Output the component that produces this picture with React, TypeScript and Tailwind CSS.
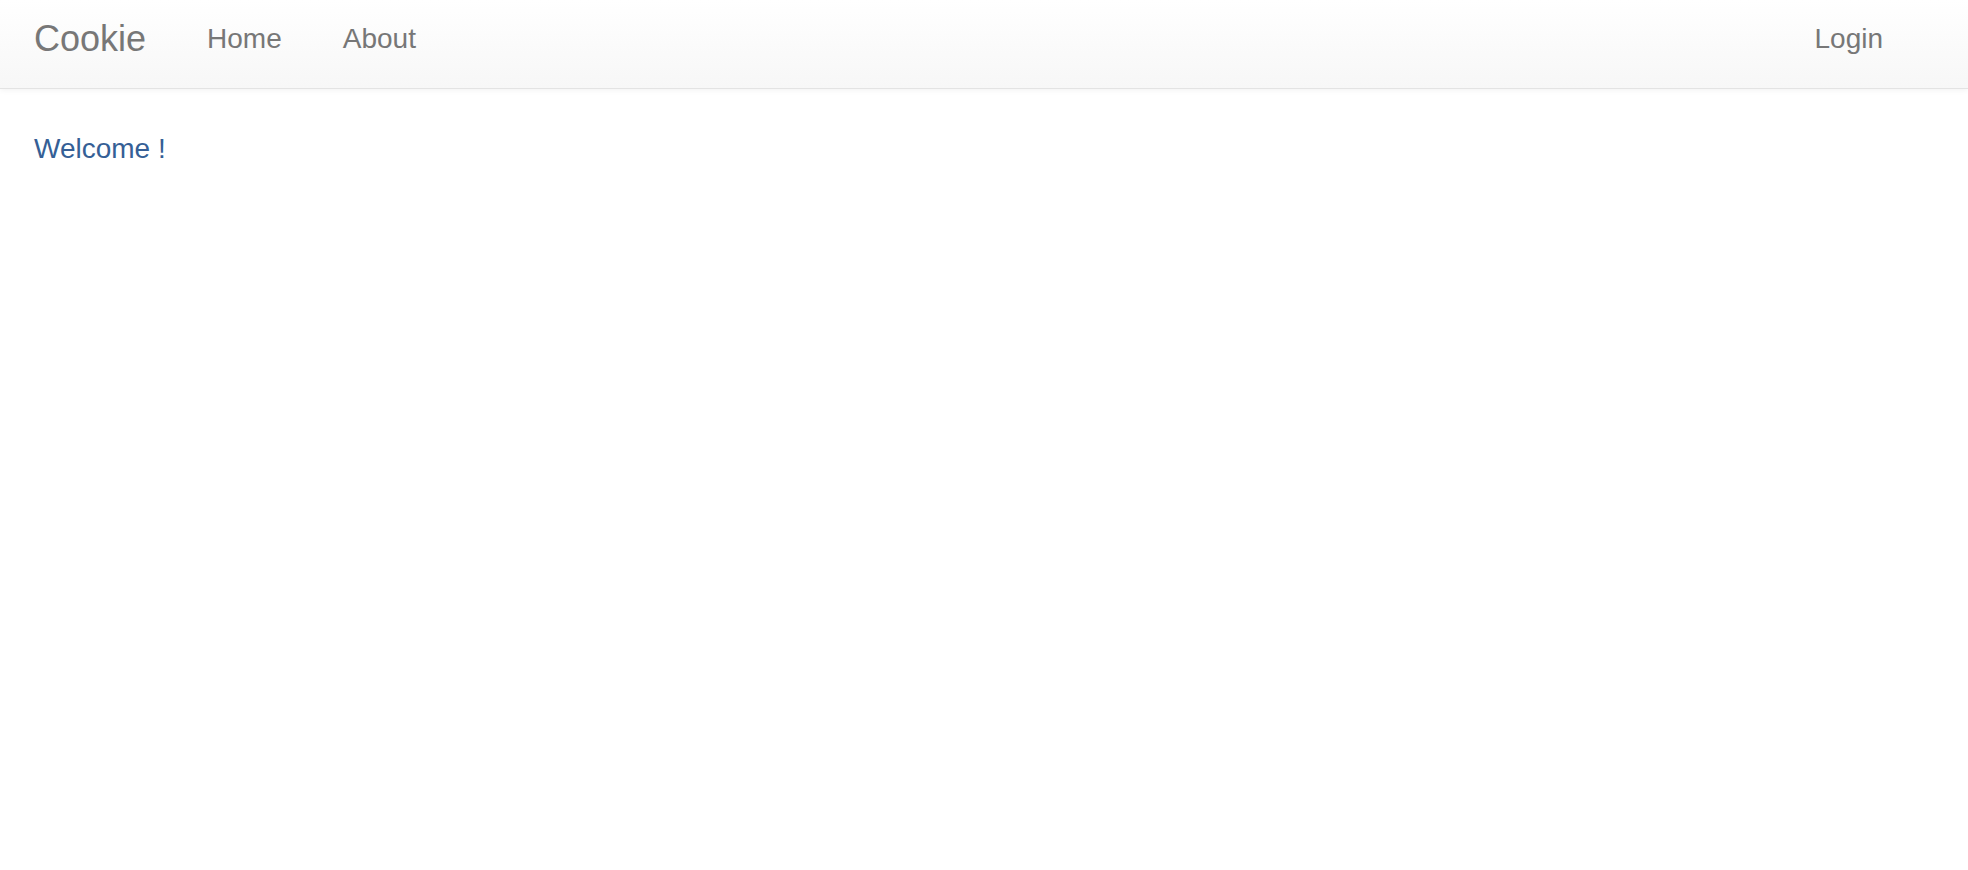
export default function App() {
  return (
    <div className="min-h-screen bg-white" style={{ fontFamily: '"Liberation Sans", Arial, sans-serif' }}>
      <nav className="h-[89px] flex items-start bg-gradient-to-b from-white to-[#f7f7f7] border-b border-[#e3e3e3] shadow-[0_1px_6px_rgba(0,0,0,0.06)] text-[#777]">
        <a href="/" className="ml-[34px] pt-[21px] text-[36px] leading-[36px]">Cookie</a>
        <ul className="flex ml-[31px]">
          <li><a href="/" className="block px-[30px] pt-[25px] text-[28px] leading-[28px]">Home</a></li>
          <li><a href="/about" className="block px-[31px] pt-[25px] text-[28px] leading-[28px]">About</a></li>
        </ul>
        <div className="ml-auto mr-[85px]">
          <a href="/login" className="block pt-[25px] text-[28px] leading-[28px]">Login</a>
        </div>
      </nav>
      <div className="px-[34px] pt-[46px]">
        <p className="text-[28px] leading-[28px] text-[#355f96]">Welcome !</p>
      </div>
    </div>
  );
}
